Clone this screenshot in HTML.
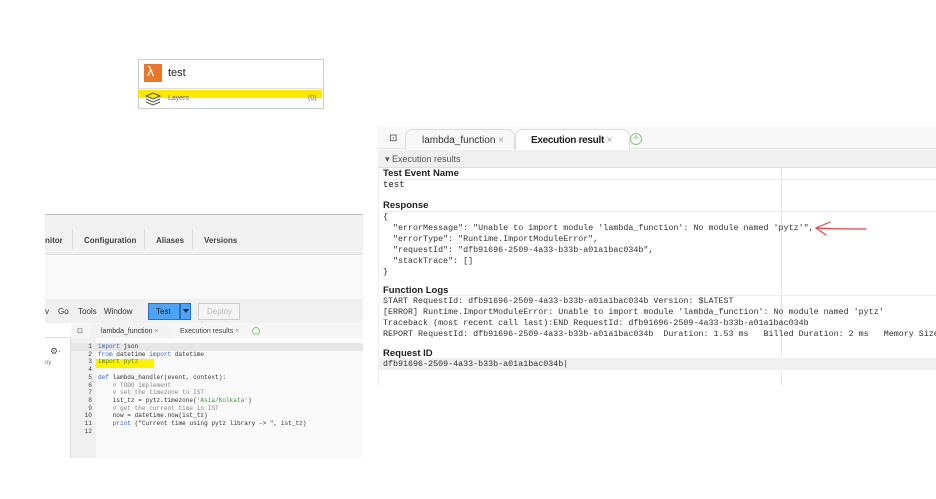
<!DOCTYPE html>
<html><head><meta charset="utf-8"><style>
*{margin:0;padding:0;box-sizing:border-box}
body{width:936px;height:499px;background:#fff;position:relative;overflow:hidden;font-family:"Liberation Sans",sans-serif;color:#222}
.a{position:absolute;white-space:nowrap}
.m{font-family:"Liberation Mono",monospace}
</style></head><body>
<!-- top card -->
<div class="a" style="left:138px;top:59px;width:186px;height:50px;border:1px solid #ccc;background:#fff"></div>
<div class="a" style="left:144px;top:64px;width:18px;height:18px;background:#e8762b"></div>
<div class="a" style="left:147px;top:63px;color:#fff;font-size:14px">λ</div>
<div class="a" style="left:168px;top:67px;font-size:11px;color:#222">test</div>
<div class="a" style="left:139px;top:88px;width:184px;height:1px;background:#ddd"></div>
<div class="a" style="left:138px;top:90px;width:184px;height:8px;background:#ffe800"></div>
<svg class="a" style="left:145px;top:92px" width="16" height="14" viewBox="0 0 16 14"><g fill="none" stroke="#555" stroke-width="1"><path d="M8 1L15 4L8 7L1 4Z"/><path d="M1 7L8 10L15 7"/><path d="M1 10L8 13L15 10"/></g></svg>
<div class="a" style="left:168px;top:95px;font-size:7px;color:#666">Layers</div>
<div class="a" style="left:308px;top:95px;font-size:7px;color:#666">(0)</div>

<!-- left screenshot -->
<div class="a" style="left:45px;top:214px;width:318px;height:1px;background:#bbb"></div>
<div class="a" style="left:45px;top:215px;width:318px;height:40px;background:#f2f2f2;border-bottom:1px solid #ddd"></div>
<div class="a" style="left:45px;top:236px;font-size:8px;font-weight:bold;color:#444">nitor</div>
<div class="a" style="left:72px;top:229px;width:1px;height:20px;background:#ddd"></div>
<div class="a" style="left:84px;top:236px;font-size:8px;font-weight:bold;color:#444">Configuration</div>
<div class="a" style="left:144px;top:229px;width:1px;height:20px;background:#ddd"></div>
<div class="a" style="left:156px;top:236px;font-size:8px;font-weight:bold;color:#444">Aliases</div>
<div class="a" style="left:192px;top:229px;width:1px;height:20px;background:#ddd"></div>
<div class="a" style="left:204px;top:236px;font-size:8px;font-weight:bold;color:#444">Versions</div>
<div class="a" style="left:45px;top:256px;width:318px;height:43px;background:#f9f9f9"></div>
<div class="a" style="left:45px;top:299px;width:318px;height:24px;background:#f0f0f0"></div>
<div class="a" style="left:45px;top:307px;font-size:8px;color:#333">v</div>
<div class="a" style="left:58px;top:307px;font-size:8px;color:#333">Go</div>
<div class="a" style="left:78px;top:307px;font-size:8px;color:#333">Tools</div>
<div class="a" style="left:104px;top:307px;font-size:8px;color:#333">Window</div>
<div class="a" style="left:148px;top:303px;width:32px;height:17px;background:#4da3f5;border:1px solid #2a6fc0"></div>
<div class="a" style="left:156px;top:307px;font-size:8px;color:#222">Test</div>
<div class="a" style="left:180px;top:303px;width:11px;height:17px;background:#4da3f5;border:1px solid #2a6fc0"></div>
<div class="a" style="left:183px;top:309px;width:0;height:0;border-left:3px solid transparent;border-right:3px solid transparent;border-top:4px solid #222"></div>
<div class="a" style="left:198px;top:303px;width:42px;height:17px;background:#f4f4f4;border:1px solid #ccc"></div>
<div class="a" style="left:207px;top:307px;font-size:8px;color:#bbb">Deploy</div>
<div class="a" style="left:45px;top:323px;width:26px;height:15px;background:#fff;border-bottom:1px solid #ddd"></div>
<div class="a" style="left:71px;top:323px;width:292px;height:15px;background:#f6f6f6"></div>
<div class="a" style="left:77px;top:327px;font-size:7px;color:#555">⊡</div>
<div class="a" style="left:90px;top:324px;width:80px;height:14px;background:#f2f2f2;border-radius:6px 6px 0 0"></div>
<div class="a" style="left:101px;top:328px;font-size:7px;color:#333">lambda_function <span style="color:#999">×</span></div>
<div class="a" style="left:180px;top:328px;font-size:7px;color:#444">Execution results <span style="color:#999">×</span></div>
<div class="a" style="left:252px;top:327px;width:8px;height:8px;border:1px solid #8c8;border-radius:50%"></div>
<div class="a" style="left:45px;top:338px;width:26px;height:120px;background:#fff;border-right:1px solid #ddd"></div>
<div class="a" style="left:50px;top:346px;font-size:9px;color:#555">⚙·</div>
<div class="a" style="left:45px;top:360px;font-size:6px;color:#777">oy</div>
<div class="a" style="left:71px;top:338px;width:25px;height:120px;background:#f0f0f0"></div>
<div class="a" style="left:96px;top:338px;width:267px;height:120px;background:#fafafa"></div>
<div class="a" style="left:71px;top:343px;width:292px;height:8px;background:#e6e6e6"></div>
<div class="a" style="left:96px;top:359px;width:58px;height:9px;background:#fff200"></div>
<div class="a m" style="left:80px;top:343px;font-size:6.2px;line-height:7.7px;color:#444;text-align:right;width:12px;white-space:pre">1
2
3
4
5
6
7
8
9
10
11
12</div>
<div class="a m" style="left:98px;top:343px;font-size:6.1px;line-height:7.7px;color:#333;white-space:pre"><span style="color:#36c">import</span> json
<span style="color:#36c">from</span> datetime <span style="color:#36c">import</span> datetime
<span style="color:#580">import pytz</span>

<span style="color:#36c">def</span> lambda_handler(event, context):
    <span style="color:#888"># TODO implement</span>
    <span style="color:#888"># set the timezone to IST</span>
    ist_tz = pytz.timezone(<span style="color:#393">'Asia/Kolkata'</span>)
    <span style="color:#888"># get the current time in IST</span>
    now = datetime.now(ist_tz)
    <span style="color:#36c">print</span> ("Current time using pytz library -> ", ist_tz)</div>

<!-- right screenshot -->
<div class="a" style="left:378px;top:127px;width:558px;height:22px;background:#f8f8f8;border-bottom:1px solid #e4e4e4"></div>
<div class="a" style="left:389px;top:133px;font-size:10px;color:#444">⊡</div>
<div class="a" style="left:405px;top:129px;width:110px;height:20px;border:1px solid #ddd;border-bottom:none;border-radius:8px 8px 0 0;background:#f8f8f8"></div>
<div class="a" style="left:422px;top:135px;font-size:10px;color:#333">lambda_function <span style="color:#999">×</span></div>
<div class="a" style="left:515px;top:129px;width:115px;height:21px;border:1px solid #ddd;border-bottom:none;border-radius:8px 8px 0 0;background:#fff"></div>
<div class="a" style="left:531px;top:135px;font-size:10px;color:#222;font-weight:bold;letter-spacing:-0.3px">Execution result<span style="font-weight:normal;color:#999"> ×</span></div>
<div class="a" style="left:630px;top:133px;width:12px;height:12px;border:1px solid #8c8;border-radius:50%;color:#8c8;font-size:10px;line-height:10px;text-align:center">+</div>
<div class="a" style="left:378px;top:150px;width:558px;height:18px;background:#f0f0f0;border-bottom:1px solid #ddd"></div>
<div class="a" style="left:385px;top:154px;font-size:9px;color:#555">▾ Execution results</div>
<div class="a" style="left:781px;top:168px;width:1px;height:218px;background:#e8e8e8"></div>
<div class="a" style="left:378px;top:168px;width:1px;height:218px;background:#eee"></div>
<div class="a" style="left:383px;top:168px;font-size:9.5px;font-weight:bold">Test Event Name</div>
<div class="a" style="left:382px;top:179px;width:554px;height:1px;background:#eee"></div>
<div class="a m" style="left:383px;top:180px;font-size:9px">test</div>
<div class="a" style="left:383px;top:200px;font-size:9.5px;font-weight:bold">Response</div>
<div class="a" style="left:382px;top:211px;width:554px;height:1px;background:#eee"></div>
<div class="a m" style="left:383px;top:212px;font-size:8.35px;line-height:11px;white-space:pre;color:#333">{
  "errorMessage": "Unable to import module 'lambda_function': No module named 'pytz'",
  "errorType": "Runtime.ImportModuleError",
  "requestId": "dfb91696-2509-4a33-b33b-a01a1bac034b",
  "stackTrace": []
}</div>
<svg class="a" style="left:812px;top:220px" width="60" height="18" viewBox="0 0 60 18"><g fill="none" stroke="#e04848" stroke-width="1.2" stroke-linecap="round"><path d="M4 8C20 9 38 9 54 9"/><path d="M18 2L4 8L14 15"/></g></svg>
<div class="a" style="left:383px;top:285px;font-size:9.5px;font-weight:bold">Function Logs</div>
<div class="a" style="left:382px;top:295px;width:554px;height:1px;background:#eee"></div>
<div class="a m" style="left:383px;top:296px;font-size:8.35px;line-height:11px;white-space:pre;color:#333">START RequestId: dfb91696-2509-4a33-b33b-a01a1bac034b Version: $LATEST
[ERROR] Runtime.ImportModuleError: Unable to import module 'lambda_function': No module named 'pytz'
Traceback (most recent call last):END RequestId: dfb91696-2509-4a33-b33b-a01a1bac034b
REPORT RequestId: dfb91696-2509-4a33-b33b-a01a1bac034b  Duration: 1.53 ms   Billed Duration: 2 ms   Memory Size</div>
<div class="a" style="left:383px;top:348px;font-size:9.5px;font-weight:bold">Request ID</div>
<div class="a" style="left:379px;top:358px;width:557px;height:12px;background:#f0f0f0"></div>
<div class="a m" style="left:383px;top:359px;font-size:8.35px;color:#333">dfb91696-2509-4a33-b33b-a01a1bac034b|</div>
</body></html>
